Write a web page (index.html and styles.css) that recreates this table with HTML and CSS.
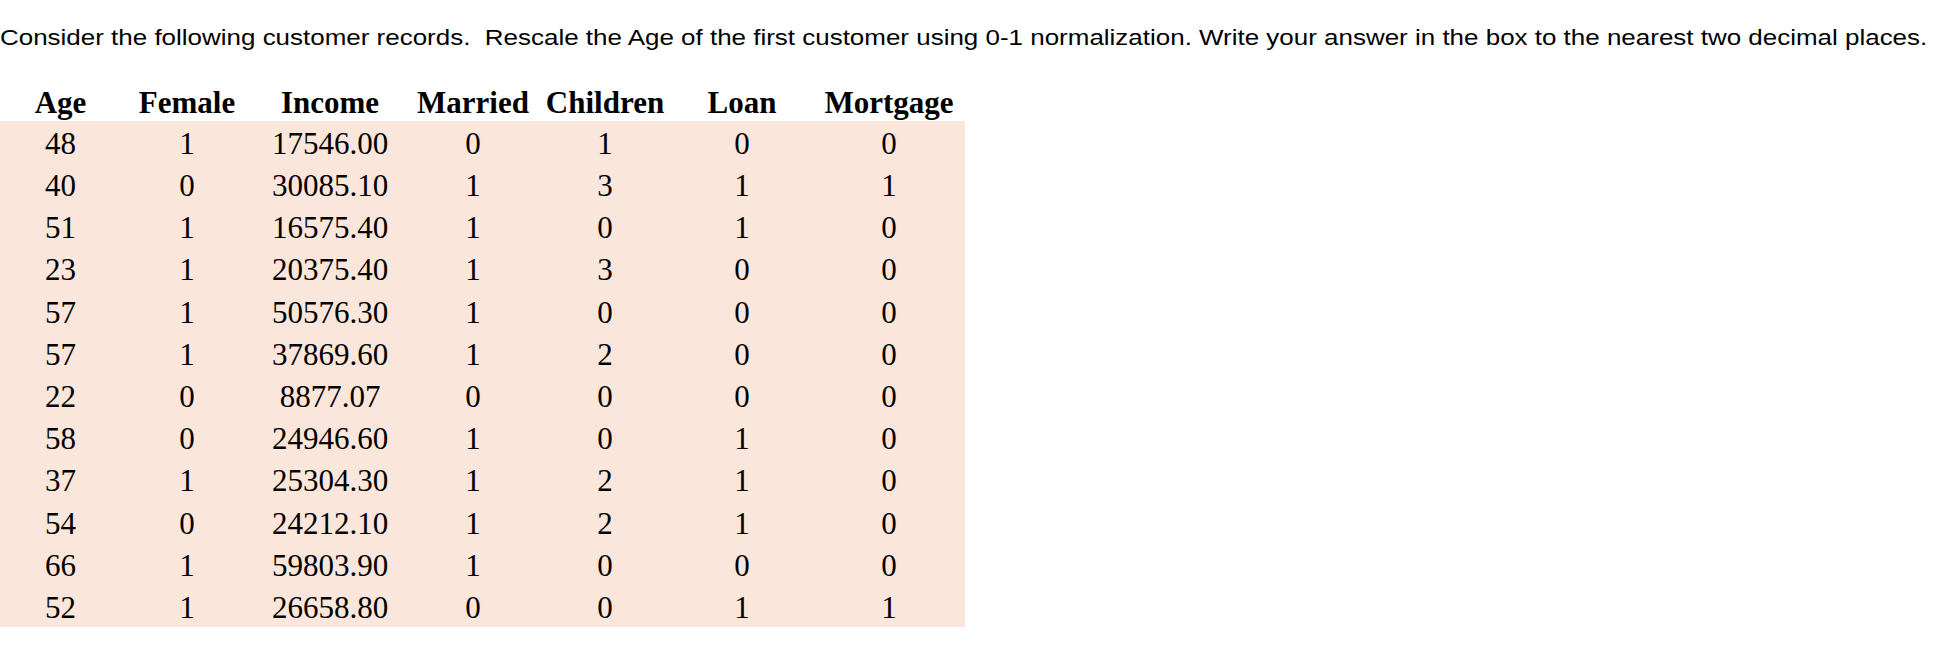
FILE: index.html
```html
<!DOCTYPE html>
<html>
<head>
<meta charset="utf-8">
<link rel="stylesheet" href="styles.css">
</head>
<body>
<p class="question">Consider the following customer records.&nbsp; Rescale the Age of the first customer using 0-1 normalization. Write your answer in the box to the nearest two decimal places.</p>
<table class="records">
  <colgroup>
    <col class="c-age"><col class="c-female"><col class="c-income"><col class="c-married"><col class="c-children"><col class="c-loan"><col class="c-mortgage">
  </colgroup>
  <thead>
    <tr><th>Age</th><th>Female</th><th>Income</th><th>Married</th><th>Children</th><th>Loan</th><th>Mortgage</th></tr>
  </thead>
  <tbody>
    <tr><td>48</td><td>1</td><td>17546.00</td><td>0</td><td>1</td><td>0</td><td>0</td></tr>
    <tr><td>40</td><td>0</td><td>30085.10</td><td>1</td><td>3</td><td>1</td><td>1</td></tr>
    <tr><td>51</td><td>1</td><td>16575.40</td><td>1</td><td>0</td><td>1</td><td>0</td></tr>
    <tr><td>23</td><td>1</td><td>20375.40</td><td>1</td><td>3</td><td>0</td><td>0</td></tr>
    <tr><td>57</td><td>1</td><td>50576.30</td><td>1</td><td>0</td><td>0</td><td>0</td></tr>
    <tr><td>57</td><td>1</td><td>37869.60</td><td>1</td><td>2</td><td>0</td><td>0</td></tr>
    <tr><td>22</td><td>0</td><td>8877.07</td><td>0</td><td>0</td><td>0</td><td>0</td></tr>
    <tr><td>58</td><td>0</td><td>24946.60</td><td>1</td><td>0</td><td>1</td><td>0</td></tr>
    <tr><td>37</td><td>1</td><td>25304.30</td><td>1</td><td>2</td><td>1</td><td>0</td></tr>
    <tr><td>54</td><td>0</td><td>24212.10</td><td>1</td><td>2</td><td>1</td><td>0</td></tr>
    <tr><td>66</td><td>1</td><td>59803.90</td><td>1</td><td>0</td><td>0</td><td>0</td></tr>
    <tr><td>52</td><td>1</td><td>26658.80</td><td>0</td><td>0</td><td>1</td><td>1</td></tr>
  </tbody>
</table>
</body>
</html>
```
FILE: styles.css
```css
html, body {
  margin: 0;
  padding: 0;
  background: #ffffff;
  color: #000000;
}

.question {
  width: max-content;
  margin: 25px 0 0 0;
  font-family: "Liberation Sans", Arial, sans-serif;
  font-size: 22px;
  line-height: 25px;
  white-space: nowrap;
  transform: scaleX(1.18);
  transform-origin: left center;
}

.records {
  margin-top: 35px;
  border-collapse: collapse;
  border-spacing: 0;
  table-layout: fixed;
  width: 965px;
  font-family: "Liberation Serif", "Times New Roman", serif;
  font-size: 31px;
}

.c-age { width: 121px; }
.c-female { width: 132px; }
.c-income { width: 154px; }
.c-married { width: 132px; }
.c-children { width: 132px; }
.c-loan { width: 142px; }
.c-mortgage { width: 152px; }

.records th {
  padding: 0;
  font-weight: bold;
  line-height: 35.7px;
  text-align: center;
  white-space: nowrap;
}

.records td {
  padding: 4px 0 0 0;
  line-height: 38.2px;
  text-align: center;
  white-space: nowrap;
}

.records tbody tr {
  background: #fae6da;
}
```
